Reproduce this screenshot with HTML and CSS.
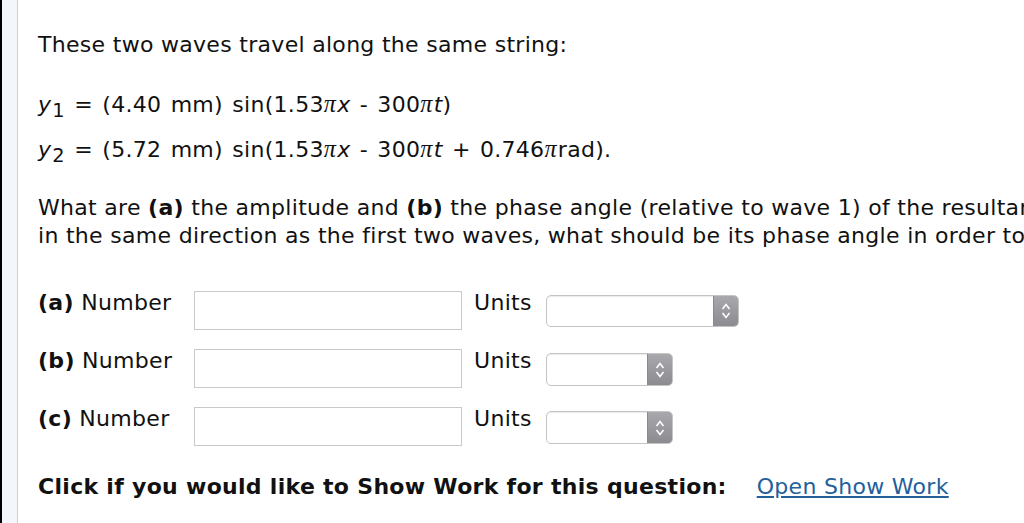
FILE: index.html
```html
<!DOCTYPE html>
<html lang="en">
<head>
    <meta charset="UTF-8">
    <meta name="viewport" content="width=device-width, initial-scale=1.0">
    <title>Question</title>
    <link rel="stylesheet" href="styles.css">
</head>
<body>

<div class="gutter"></div>

<div class="question">
    <p class="intro">These two waves travel along the same string:</p>

    <div class="equations">
        <div><i>y</i><sub>1</sub> = (4.40 mm) sin(1.53<i class="pi">π</i><i>x</i> - 300<i class="pi">π</i><i>t</i>)</div>
        <div><i>y</i><sub>2</sub> = (5.72 mm) sin(1.53<i class="pi">π</i><i>x</i> - 300<i class="pi">π</i><i>t</i> + 0.746<i class="pi">π</i>rad).</div>
    </div>

    <p class="prompt">What are <b>(a)</b> the amplitude and <b>(b)</b> the phase angle (relative to wave 1) of the resultant wave? <b>(c)</b> If a third wave of amplitude 5.72 mm is also to be sent along the string<br>in the same direction as the first two waves, what should be its phase angle in order to maximize the amplitude of the new resultant wave?</p>

    <div class="answers">
        <div class="answer-row">
            <label class="number-label"><b>(a)</b> Number</label>
            <input type="text" class="number-input">
            <span class="units-label">Units</span>
            <div class="select-box wide">
                <select></select>
                <span class="select-arrow">
                    <svg width="10" height="18" viewBox="0 0 10 18"><path d="M1.5 7 L5 2.5 L8.5 7 M1.5 11 L5 15.5 L8.5 11" fill="none" stroke="#fff" stroke-width="1.6"/></svg>
                </span>
            </div>
        </div>
        <div class="answer-row">
            <label class="number-label"><b>(b)</b> Number</label>
            <input type="text" class="number-input">
            <span class="units-label">Units</span>
            <div class="select-box">
                <select></select>
                <span class="select-arrow">
                    <svg width="10" height="18" viewBox="0 0 10 18"><path d="M1.5 7 L5 2.5 L8.5 7 M1.5 11 L5 15.5 L8.5 11" fill="none" stroke="#fff" stroke-width="1.6"/></svg>
                </span>
            </div>
        </div>
        <div class="answer-row">
            <label class="number-label"><b>(c)</b> Number</label>
            <input type="text" class="number-input">
            <span class="units-label">Units</span>
            <div class="select-box">
                <select></select>
                <span class="select-arrow">
                    <svg width="10" height="18" viewBox="0 0 10 18"><path d="M1.5 7 L5 2.5 L8.5 7 M1.5 11 L5 15.5 L8.5 11" fill="none" stroke="#fff" stroke-width="1.6"/></svg>
                </span>
            </div>
        </div>
    </div>

    <p class="show-work"><b>Click if you would like to Show Work for this question:</b><a href="#">Open Show Work</a></p>
</div>

</body>
</html>
```

FILE: styles.css
```css
* {
    box-sizing: border-box;
    margin: 0;
    padding: 0;
}

html, body {
    height: 100%;
}

body {
    display: flex;
    min-height: 100vh;
    overflow: hidden;
    background: #fff;
    border-left: 2px solid #000;
    font-family: "DejaVu Sans", Verdana, sans-serif;
    font-size: 22px;
    line-height: 28px;
    letter-spacing: 0.3px;
    color: #111;
}

.gutter {
    flex: 0 0 16px;
    background-color: #f3f6fa;
    border-right: 1px solid #c8d1db;
}

.question {
    flex: 1;
    padding: 31px 0 0 20px;
    white-space: nowrap;
}

.equations {
    margin-top: 23px;
    line-height: 45px;
    word-spacing: 2px;
}

.equations sub {
    font-size: 0.88em;
    vertical-align: -0.25em;
    line-height: 0;
    margin-left: 1px;
}

.equations .pi {
    font-family: "Liberation Serif", serif;
    font-size: 1.1em;
    line-height: 0;
    margin-right: 1px;
}

.prompt {
    margin-top: 22px;
}

.answers {
    margin-top: 39px;
}

.answer-row {
    display: flex;
    align-items: flex-start;
    margin-bottom: 17px;
}

.answer-row:last-child {
    margin-bottom: 0;
}

.number-label {
    width: 156px;
}

.number-input {
    width: 268px;
    height: 39px;
    margin-top: 2px;
    border: 1px solid #c9c9c9;
    background: #fff;
}

.units-label {
    width: 72px;
    margin-left: 12px;
}

.select-box {
    display: flex;
    width: 127px;
    height: 33px;
    margin-top: 6px;
    border: 1px solid #c4c4c4;
    border-radius: 5px;
    overflow: hidden;
    box-shadow: inset 0 1px 1px rgba(0, 0, 0, 0.08);
}

.select-box.wide {
    width: 193px;
    height: 32px;
}

.select-box select {
    flex: 1;
    border: none;
    background: transparent;
    appearance: none;
    -webkit-appearance: none;
}

.select-arrow {
    display: flex;
    align-items: center;
    justify-content: center;
    width: 25px;
    background: linear-gradient(#a9a9ad, #8c8c90);
    border-left: 1px solid #8a8a8e;
}

.show-work {
    margin-top: 27px;
}

.show-work a {
    margin-left: 30px;
    color: #23609b;
}
```
